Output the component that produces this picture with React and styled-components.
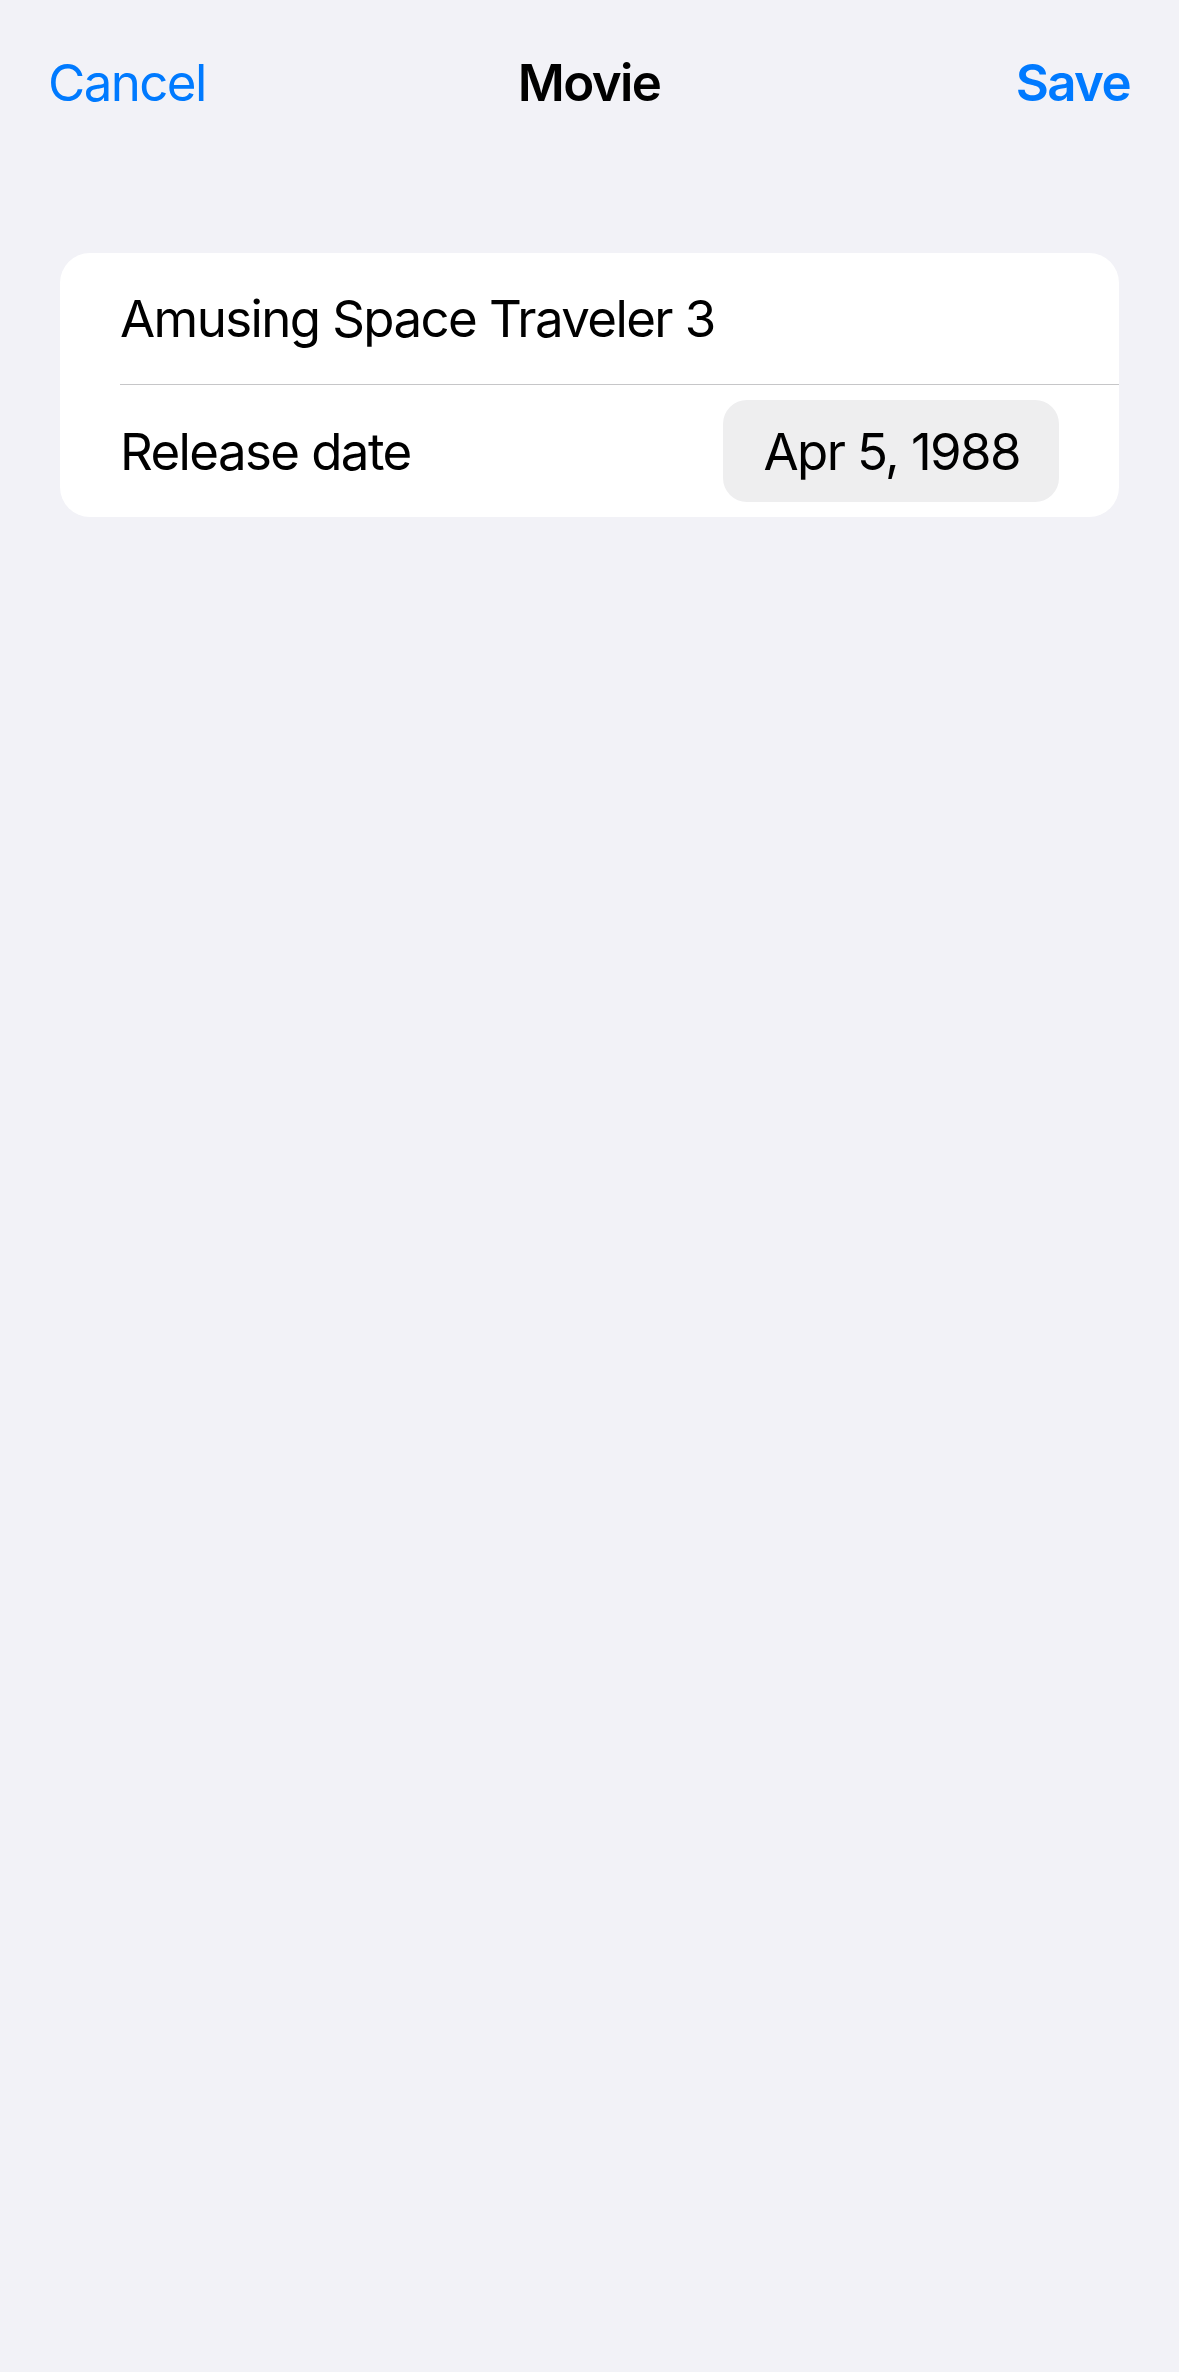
import React from 'react';
import styled, { createGlobalStyle } from 'styled-components';

const GlobalStyle = createGlobalStyle`
  html, body {
    margin: 0;
    padding: 0;
    background: #f2f2f7;
  }
  body {
    font-family: Inter, "Noto Sans", "Liberation Sans", sans-serif;
    -webkit-font-smoothing: antialiased;
  }
`;

const Screen = styled.div`
  min-height: 2372px;
  background: #f2f2f7;
`;

const NavBar = styled.div`
  display: grid;
  grid-template-columns: 1fr auto 1fr;
  align-items: center;
  padding: 52px 49px 0 48px;
  font-size: 51px;
  line-height: 61px;
  letter-spacing: -1.6px;
`;

const NavButton = styled.div`
  color: #007aff;
  font-weight: ${(props) => (props.$bold ? 600 : 400)};
  justify-self: ${(props) => (props.$end ? 'end' : 'start')};
`;

const NavTitle = styled.div`
  color: #000;
  font-weight: 600;
`;

const Card = styled.div`
  margin: 140px 60px 0;
  background: #fff;
  border-radius: 30px;
  overflow: hidden;
`;

const Row = styled.div`
  padding-left: 60px;
`;

const RowContent = styled.div`
  display: flex;
  align-items: center;
  justify-content: space-between;
  height: ${(props) => (props.$divider ? 131 : 132)}px;
  padding-right: 60px;
  border-bottom: ${(props) => (props.$divider ? '1px solid #c6c6c8' : 'none')};
  font-size: 51px;
  line-height: 61px;
  letter-spacing: -1.6px;
  color: #000;
`;

const DatePill = styled.div`
  display: flex;
  align-items: center;
  height: 102px;
  padding: 0 39px 0 40px;
  border-radius: 24px;
  background: #eeeeef;
`;

export default function App() {
  return (
    <>
      <GlobalStyle />
      <Screen>
        <NavBar>
          <NavButton>Cancel</NavButton>
          <NavTitle>Movie</NavTitle>
          <NavButton $bold $end>Save</NavButton>
        </NavBar>
        <Card>
          <Row>
            <RowContent $divider>Amusing Space Traveler 3</RowContent>
          </Row>
          <Row>
            <RowContent>
              <span>Release date</span>
              <DatePill>Apr 5, 1988</DatePill>
            </RowContent>
          </Row>
        </Card>
      </Screen>
    </>
  );
}
